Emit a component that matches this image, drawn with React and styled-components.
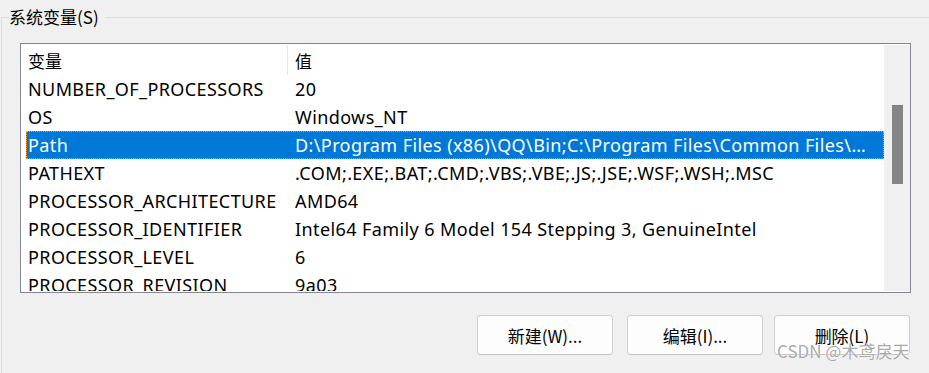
import React from "react";
import styled, { createGlobalStyle } from "styled-components";

const Global = createGlobalStyle`
  html, body { margin: 0; padding: 0; background: #f0f0f0; }
  body { font-family: "Noto Sans", "Noto Sans CJK SC", sans-serif; color: #000; }
`;

const Page = styled.div`
  position: relative;
  width: 929px;
  height: 373px;
  overflow: hidden;
  background: #f0f0f0;
`;

const GroupBox = styled.fieldset`
  margin: 0 0 0 1px;
  padding: 0 0 0 18px;
  border: 1px solid #dcdcdc;
  border-right: none;
  border-bottom: none;
  min-height: 400px;
  box-sizing: border-box;
  width: 940px;
`;

const Legend = styled.legend`
  margin-left: -11px;
  padding: 0 6px 0 0;
  font-family: "Noto Sans CJK SC", "Noto Sans", sans-serif;
  font-size: 17px;
  line-height: 34px;
  color: #000;
`;

const ListBox = styled.div`
  margin-top: 9px;
  width: 891px;
  height: 250px;
  box-sizing: border-box;
  border: 1px solid #828790;
  background: #fff;
  display: flex;
  padding: 1px 0 1px 0;
  overflow: hidden;
`;

const Table = styled.div`
  flex: 1;
  padding-left: 5px;
  overflow: hidden;
`;

const Row = styled.div`
  display: grid;
  grid-template-columns: 261px 1fr;
  height: ${p => (p.$header ? 30 : 28)}px;
  align-items: center;
  font-size: 18px;
  letter-spacing: 0.4px;
  box-sizing: border-box;
  background: ${p => (p.$selected ? "#0078d7" : "transparent")};
  color: ${p => (p.$selected ? "#fff" : "#000")};
  outline: ${p => (p.$selected ? "1px dotted #ff9a2e" : "none")};
  outline-offset: -1px;
  white-space: nowrap;
`;

const NameCell = styled.div`
  padding-left: 2px;
  overflow: hidden;
  font-family: ${p => (p.$cjk ? '"Noto Sans CJK SC", sans-serif' : '"Noto Sans", sans-serif')};
  font-size: ${p => (p.$cjk ? "17px" : "18px")};
  letter-spacing: ${p => (p.$cjk ? "0" : "0.4px")};
`;

const ValueCell = styled.div`
  padding-left: 7px;
  overflow: hidden;
  align-self: stretch;
  display: flex;
  align-items: center;
  border-left: ${p => (p.$header ? "1px solid #e5e5e5" : "1px solid transparent")};
  font-family: ${p => (p.$cjk ? '"Noto Sans CJK SC", sans-serif' : '"Noto Sans", sans-serif')};
  font-size: ${p => (p.$cjk ? "17px" : "18px")};
  letter-spacing: ${p => (p.$cjk ? "0" : "0.4px")};
`;

const Ellip = styled.span`
  overflow: hidden;
  text-overflow: ellipsis;
  white-space: nowrap;
  display: block;
  padding-right: 4px;
`;

const Track = styled.div`
  width: 26px;
  background: #f0f0f0;
  display: flex;
  justify-content: center;
  padding-top: 60px;
`;

const Thumb = styled.div`
  width: 11px;
  height: 79px;
  background: #858585;
  border-top: 1px solid #7a7a7a;
  box-sizing: border-box;
`;

const ButtonRow = styled.div`
  display: flex;
  margin-top: 22px;
  margin-left: 457px;
`;

const Button = styled.button`
  width: 136px;
  height: 40px;
  margin-left: ${p => p.$ml || 0}px;
  background: #fdfdfd;
  border: 1px solid #d0d0d0;
  border-bottom-color: #c4c4c4;
  border-radius: 4px;
  font-family: "Noto Sans CJK SC", "Noto Sans", sans-serif;
  font-size: 17px;
  color: #000;
  padding: 0;
`;

const Watermark = styled.div`
  position: absolute;
  left: 777px;
  top: 338px;
  font-family: "Noto Sans CJK SC", "Noto Sans", sans-serif;
  font-size: 17px;
  color: rgba(140, 140, 140, 0.75);
  text-shadow: 0 0 1px #fff, 0 0 1px #fff;
  white-space: nowrap;
`;

const rows = [
  ["NUMBER_OF_PROCESSORS", "20"],
  ["OS", "Windows_NT"],
  ["Path", "D:\\Program Files (x86)\\QQ\\Bin;C:\\Program Files\\Common Files\\Oracle\\Java\\javapath;C:\\Windows"],
  ["PATHEXT", ".COM;.EXE;.BAT;.CMD;.VBS;.VBE;.JS;.JSE;.WSF;.WSH;.MSC"],
  ["PROCESSOR_ARCHITECTURE", "AMD64"],
  ["PROCESSOR_IDENTIFIER", "Intel64 Family 6 Model 154 Stepping 3, GenuineIntel"],
  ["PROCESSOR_LEVEL", "6"],
  ["PROCESSOR_REVISION", "9a03"],
];

export default function App() {
  return (
    <Page>
      <Global />
      <GroupBox>
        <Legend>系统变量(S)</Legend>
        <ListBox>
          <Table>
            <Row $header>
              <NameCell $cjk>变量</NameCell>
              <ValueCell $header $cjk>值</ValueCell>
            </Row>
            {rows.map(([k, v]) => (
              <Row key={k} $selected={k === "Path"}>
                <NameCell>{k}</NameCell>
                <ValueCell><Ellip>{v}</Ellip></ValueCell>
              </Row>
            ))}
          </Table>
          <Track>
            <Thumb />
          </Track>
        </ListBox>
        <ButtonRow>
          <Button>新建(W)...</Button>
          <Button $ml={14}>编辑(I)...</Button>
          <Button $ml={11}>删除(L)</Button>
        </ButtonRow>
      </GroupBox>
      <Watermark>CSDN @木鸢戾天</Watermark>
    </Page>
  );
}
